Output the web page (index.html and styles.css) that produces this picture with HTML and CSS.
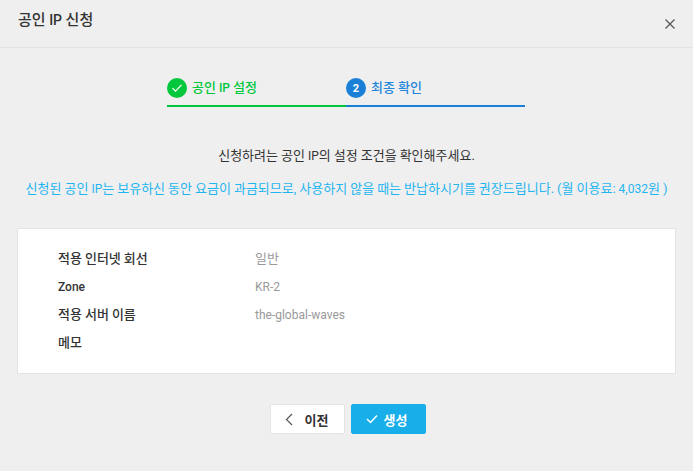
FILE: index.html
```html
<!DOCTYPE html>
<html lang="ko">
<head>
<meta charset="utf-8">
<title>공인 IP 신청</title>
<link rel="stylesheet" href="styles.css">
</head>
<body>
<div class="modal">
  <header class="head">
    <h1 class="title">공인 <span class="la-title">IP</span> 신청</h1>
    <svg class="close" width="12" height="12" viewBox="0 0 12 12"><path d="M1.5 1.5l9 9M10.5 1.5l-9 9" stroke="#555" stroke-width="1.2" fill="none"/></svg>
  </header>
  <div class="steps">
    <div class="step step-done">
      <span class="dot dot-done"><svg width="12" height="10" viewBox="0 0 12 10"><path d="M1.5 5.2l3 3 6-6.4" stroke="#fff" stroke-width="1.2" fill="none"/></svg></span>
      <span class="step-label">공인 <span class="la">IP</span> 설정</span>
    </div>
    <div class="step step-now">
      <span class="dot dot-now">2</span>
      <span class="step-label">최종 확인</span>
    </div>
  </div>
  <p class="lead">신청하려는 공인 <span class="la">IP</span>의 설정 조건을 확인해주세요.</p>
  <p class="notice">신청된 공인 <span class="la">IP</span>는 보유하신 동안 요금이 과금되므로, 사용하지 않을 때는 반납하시기를 권장드립니다. (월 이용료: <span class="la">4,032</span>원 )</p>
  <section class="card">
    <div class="row"><span class="key">적용 인터넷 회선</span><span class="val">일반</span></div>
    <div class="row"><span class="key"><span class="la">Zone</span></span><span class="val"><span class="la">KR-2</span></span></div>
    <div class="row"><span class="key">적용 서버 이름</span><span class="val"><span class="la">the-global-waves</span></span></div>
    <div class="row"><span class="key">메모</span><span class="val"></span></div>
  </section>
  <div class="actions">
    <button class="btn btn-prev"><svg width="8" height="13" viewBox="0 0 8 13"><path d="M7 1L1.5 6.5 7 12" stroke="#555" stroke-width="1.2" fill="none"/></svg><span>이전</span></button>
    <button class="btn btn-go"><svg width="12" height="10" viewBox="0 0 12 10"><path d="M1 5l3.5 3.5L11 1.5" stroke="#fff" stroke-width="1.5" fill="none"/></svg><span>생성</span></button>
  </div>
</div>
</body>
</html>
```
FILE: styles.css
```css
* { box-sizing: border-box; }
html, body { margin: 0; height: 100%; }
body {
  background: #efefef;
  font-family: Roboto, "Noto Sans CJK KR", sans-serif;
  font-size: 13px;
  word-spacing: -0.2px;
  color: #333;
  overflow: hidden;
}
.la { font-size: 12px; }
.la-title { font-size: 14px; }
.modal { width: 693px; height: 471px; display: flex; flex-direction: column; }
.head {
  height: 48px;
  flex: none;
  border-bottom: 1px solid #e2e2e2;
  display: flex;
  align-items: flex-start;
  justify-content: space-between;
  padding: 12px 17px 0 18px;
}
.title { margin: 0; font-size: 15px; line-height: 17px; font-weight: 500; color: #333; }
.close { margin-top: 6px; }
.steps { display: flex; justify-content: center; margin: 30px 1px 0 0; height: 29px; }
.step { width: 179px; display: flex; align-items: flex-start; gap: 5px; border-bottom: 2px solid; height: 29px; }
.step-done { border-color: #00c73c; color: #00c73c; }
.step-now { border-color: #1a7fd6; color: #1a7fd6; }
.step-label { font-weight: 500; line-height: 19px; font-size: 13px; }
.step-done .step-label { color: #00c73c; }
.step-now .step-label { color: #1f86dc; }
.dot {
  width: 20px; height: 20px; border-radius: 50%;
  display: flex; align-items: center; justify-content: center;
  color: #fff; font-size: 11px; font-weight: 700;
}
.dot-done { background: #00c73c; }
.dot-now { background: #1a7fd6; }
.lead { margin: 40px 0 0; text-align: center; line-height: 18px; color: #333; }
.notice { margin: 15px 0 0; text-align: center; line-height: 18px; color: #1fb5f0; }
.card {
  margin: 30px 17px 0;
  height: 146px;
  background: #fff;
  border: 1px solid #e4e4e4;
  padding: 15.5px 40px;
  display: flex;
  flex-direction: column;
}
.row { display: flex; height: 28px; align-items: center; line-height: 18px; }
.key { width: 197px; font-weight: 500; color: #333; }
.val { color: #999; }
.actions { display: flex; justify-content: center; gap: 6px; margin: 30px 0 0 2px; }
.btn {
  height: 30px;
  font: inherit;
  font-weight: 700;
  font-size: 13px;
  display: flex; align-items: center; justify-content: center;
  border-radius: 2px;
  padding: 0;
}
.btn-prev { width: 75px; background: #fff; border: 1px solid #e4e4e4; color: #333; gap: 12px; padding-right: 1px; }
.btn-go { width: 75px; background: #17aeea; border: 1px solid #17aeea; color: #fff; gap: 6px; padding-right: 3px; }
```
